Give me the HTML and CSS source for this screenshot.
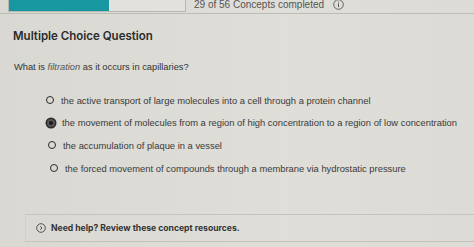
FILE: index.html
```html
<!DOCTYPE html>
<html>
<head>
<meta charset="utf-8">
<link rel="stylesheet" href="styles.css">
</head>
<body>
<div class="page">
  <div class="topbar">
    <div class="progress"><div class="fill" style="width:57%"></div></div>
    <div class="count">29 of 56 Concepts completed</div>
    <svg class="info" width="11" height="11" viewBox="0 0 11 11"><circle cx="5.5" cy="5.5" r="4.8" fill="none" stroke="#555" stroke-width="0.9"/><line x1="5.5" y1="4.5" x2="5.5" y2="8" stroke="#555" stroke-width="1"/><circle cx="5.5" cy="3" r="0.6" fill="#555"/></svg>
  </div>
  <h1 class="title">Multiple Choice Question</h1>
  <p class="question">What is <em>filtration</em> as it occurs in capillaries?</p>
  <ul class="options">
    <li class="opt"><span class="radio"></span>the active transport of large molecules into a cell through a protein channel</li>
    <li class="opt"><span class="radio checked"></span>the movement of molecules from a region of high concentration to a region of low concentration</li>
    <li class="opt"><span class="radio"></span>the accumulation of plaque in a vessel</li>
    <li class="opt"><span class="radio"></span>the forced movement of compounds through a membrane via hydrostatic pressure</li>
  </ul>
  <div class="help">
    <svg class="chev" width="10" height="10" viewBox="0 0 10 10"><circle cx="5" cy="5" r="4.3" fill="none" stroke="#444" stroke-width="0.9"/><path d="M4.2 3.2 L6 5 L4.2 6.8" fill="none" stroke="#444" stroke-width="0.9"/></svg>
    <span class="helptext">Need help? Review these concept resources.</span>
  </div>
</div>
</body>
</html>
```

FILE: styles.css
```css
html, body {
  margin: 0;
  padding: 0;
  background: #dcdbd5;
}
.page {
  width: 474px;
  height: 247px;
  overflow: hidden;
  font-family: "Liberation Sans", Arial, sans-serif;
  color: #2f2f2f;
  background: linear-gradient(90deg, #d9d8d2 0%, #dfded8 60%, #dcdbd5 100%);
}
.topbar {
  display: flex;
  align-items: center;
  height: 16px;
  padding-left: 8px;
  border-bottom: 1px solid #bdbcb6;
  margin-top: -3px;
}
.progress {
  width: 178px;
  height: 15px;
  border: 1px solid #b8b7b1;
  border-top: none;
  background: #e2e1db;
  box-sizing: border-box;
  align-self: flex-start;
}
.fill {
  height: 100%;
  background: #17979f;
}
.count {
  margin-left: 8px;
  font-size: 10px;
  color: #555;
  margin-top: -2px;
}
.info {
  margin-left: 9px;
  margin-top: -2px;
}
.title {
  margin: 15px 0 0 13px;
  font-family: Inter, "Liberation Sans", sans-serif;
  font-size: 11.5px;
  font-weight: 600;
  color: #2b2b2b;
}
.question {
  margin: 19px 0 0 14px;
  font-size: 9.3px;
  color: #333;
}
.question em {
  font-style: italic;
  color: #555;
}
.options {
  list-style: none;
  margin: 17px 0 0 46px;
  padding: 0;
}
.opt {
  display: flex;
  align-items: center;
  gap: 7px;
  height: 22.6px;
  font-size: 9.4px;
  color: #3a3a3a;
}
.opt:nth-child(2) { padding-left: 1px; }
.opt:nth-child(3) { padding-left: 2px; }
.opt:nth-child(4) { padding-left: 4px; }
.radio {
  width: 6px;
  height: 6px;
  border: 1.6px solid #2a2a2a;
  border-radius: 50%;
  flex: none;
}
.radio.checked {
  width: 4px;
  height: 4px;
  background: #1a1a1a;
  border: 2px solid #555;
  box-shadow: 0 0 0 1.5px #2a2a2a;
}
.help {
  margin: 35px 0 0 25px;
  height: 26px;
  border-top: 1px solid #c4c3bd;
  border-bottom: 1px solid #c4c3bd;
  border-left: 1px solid #d0cfc9;
  display: flex;
  align-items: center;
  padding-left: 10px;
  gap: 5px;
}
.helptext {
  font-family: Inter, "Liberation Sans", sans-serif;
  font-size: 8.6px;
  font-weight: 700;
  color: #333;
}
```
